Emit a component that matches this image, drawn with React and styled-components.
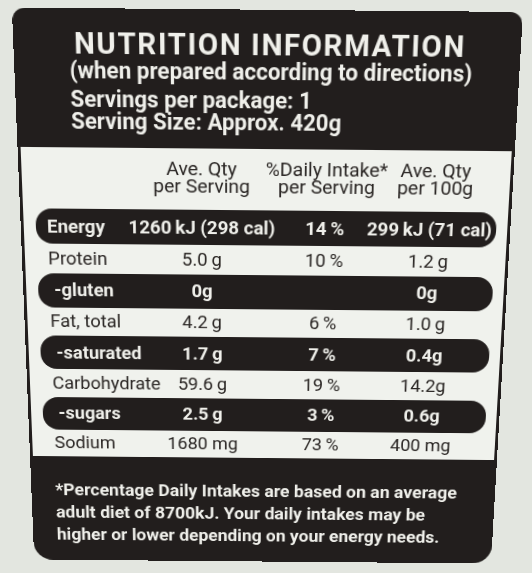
import React from 'react'
import styled, { createGlobalStyle } from 'styled-components'

const DARK = '#221e1d'
const PAPER = '#f0f2ed'
const INK = '#2a2624'
const LIGHT = '#f0f0eb'

const GlobalStyle = createGlobalStyle`
  html, body {
    margin: 0;
    padding: 0;
  }
  body {
    width: 532px;
    height: 573px;
    overflow: hidden;
    background: #e3e6e0;
    font-family: Roboto, 'Liberation Sans', sans-serif;
  }
`

const rows = [
  { name: 'Energy', serve: '1260\u2009kJ (298 cal)', di: '14\u2009%', per100: '299\u2009kJ (71 cal)', band: true },
  { name: 'Protein', serve: '5.0\u2009g', di: '10\u2009%', per100: '1.2\u2009g' },
  { name: '-gluten', serve: '0g', di: '', per100: '0g', band: true, sub: true },
  { name: 'Fat, total', serve: '4.2\u2009g', di: '6\u2009%', per100: '1.0\u2009g' },
  { name: '-saturated', serve: '1.7\u2009g', di: '7\u2009%', per100: '0.4g', band: true, sub: true },
  { name: 'Carbohydrate', serve: '59.6\u2009g', di: '19\u2009%', per100: '14.2g' },
  { name: '-sugars', serve: '2.5\u2009g', di: '3\u2009%', per100: '0.6g', band: true, sub: true },
  { name: 'Sodium', serve: '1680 mg', di: '73\u2009%', per100: '400 mg' },
]

// the label is photographed at an angle: top edge nearer the camera
const Label = styled.section`
  width: 484px;
  margin: 19px 0 0 23px;
  background: ${DARK};
  border-radius: 12px 12px 20px 20px;
  color: ${LIGHT};
  transform-origin: 50% 266px;
  transform: rotate(0.5deg) perspective(1000px) rotateX(-11.5deg);
`

const Header = styled.header`
  padding: 19px 0 15px 53px;
  font-weight: 700;
`

const Title = styled.h1`
  margin: 0;
  padding-left: 5px;
  font-size: 28px;
  line-height: 28px;
  letter-spacing: 1.6px;
`

const Note = styled.p`
  margin: 0;
  font-size: 21.5px;
  line-height: 22px;
`

const Servings = styled.div`
  margin-top: 5px;
  font-size: 21.5px;
  line-height: 21px;
`

const Table = styled.div`
  margin: 0 3px;
  background: ${PAPER};
`

const ColHead = styled.div`
  display: grid;
  grid-template-columns: 109.5px 110px 135px 78px;
  margin: 0 11.5px;
  height: 60px;
  padding-top: 11px;
  box-sizing: border-box;
  color: ${INK};
  font-size: 19px;
  line-height: 17px;
`

const HeadCell = styled.div`
  display: flex;
  flex-direction: column;
  align-items: center;
  white-space: nowrap;
  grid-column: ${p => p.$col};
`

const Row = styled.div`
  display: grid;
  grid-template-columns: 109.5px 110px 133px 74px;
  align-items: center;
  margin: 0 11.5px;
  height: ${p => (p.$band ? '35px' : '29.5px')};
  border-radius: 16px;
  background: ${p => (p.$band ? DARK : 'transparent')};
  color: ${p => (p.$band ? LIGHT : INK)};
  font-size: ${p => (p.$band ? '18.5px' : '18.5px')};
  font-weight: ${p => (p.$band ? 700 : 400)};
`

const Name = styled.div`
  padding-left: ${p => (p.$sub ? '16.5px' : '11.5px')};
  white-space: nowrap;
`

const Cell = styled.div`
  display: flex;
  justify-content: center;
  white-space: nowrap;
`

const Footer = styled.footer`
  padding: 25px 0 17px 25px;
  font-size: 18.4px;
  font-weight: 700;
  line-height: 24.75px;
`

const App = () => {
  return (
    <>
      <GlobalStyle />
      <Label>
        <Header>
          <Title>NUTRITION INFORMATION</Title>
          <Note>(when prepared according to directions)</Note>
          <Servings>
            Servings per package: 1
            <br />
            Serving Size: Approx. 420g
          </Servings>
        </Header>
        <Table>
          <ColHead>
            <HeadCell $col={2}>
              <span>Ave. Qty</span>
              <span>per Serving</span>
            </HeadCell>
            <HeadCell $col={3}>
              <span>%Daily Intake*</span>
              <span>per Serving</span>
            </HeadCell>
            <HeadCell $col={4}>
              <span>Ave. Qty</span>
              <span>per 100g</span>
            </HeadCell>
          </ColHead>
          {rows.map((item, index) => (
            <Row $band={item.band} key={index}>
              <Name $sub={item.sub}>{item.name}</Name>
              <Cell>{item.serve}</Cell>
              <Cell>{item.di}</Cell>
              <Cell>{item.per100}</Cell>
            </Row>
          ))}
        </Table>
        <Footer>
          *Percentage Daily Intakes are based on an average
          <br />
          adult diet of 8700kJ. Your daily intakes may be
          <br />
          higher or lower depending on your energy needs.
        </Footer>
      </Label>
    </>
  )
}

export default App
